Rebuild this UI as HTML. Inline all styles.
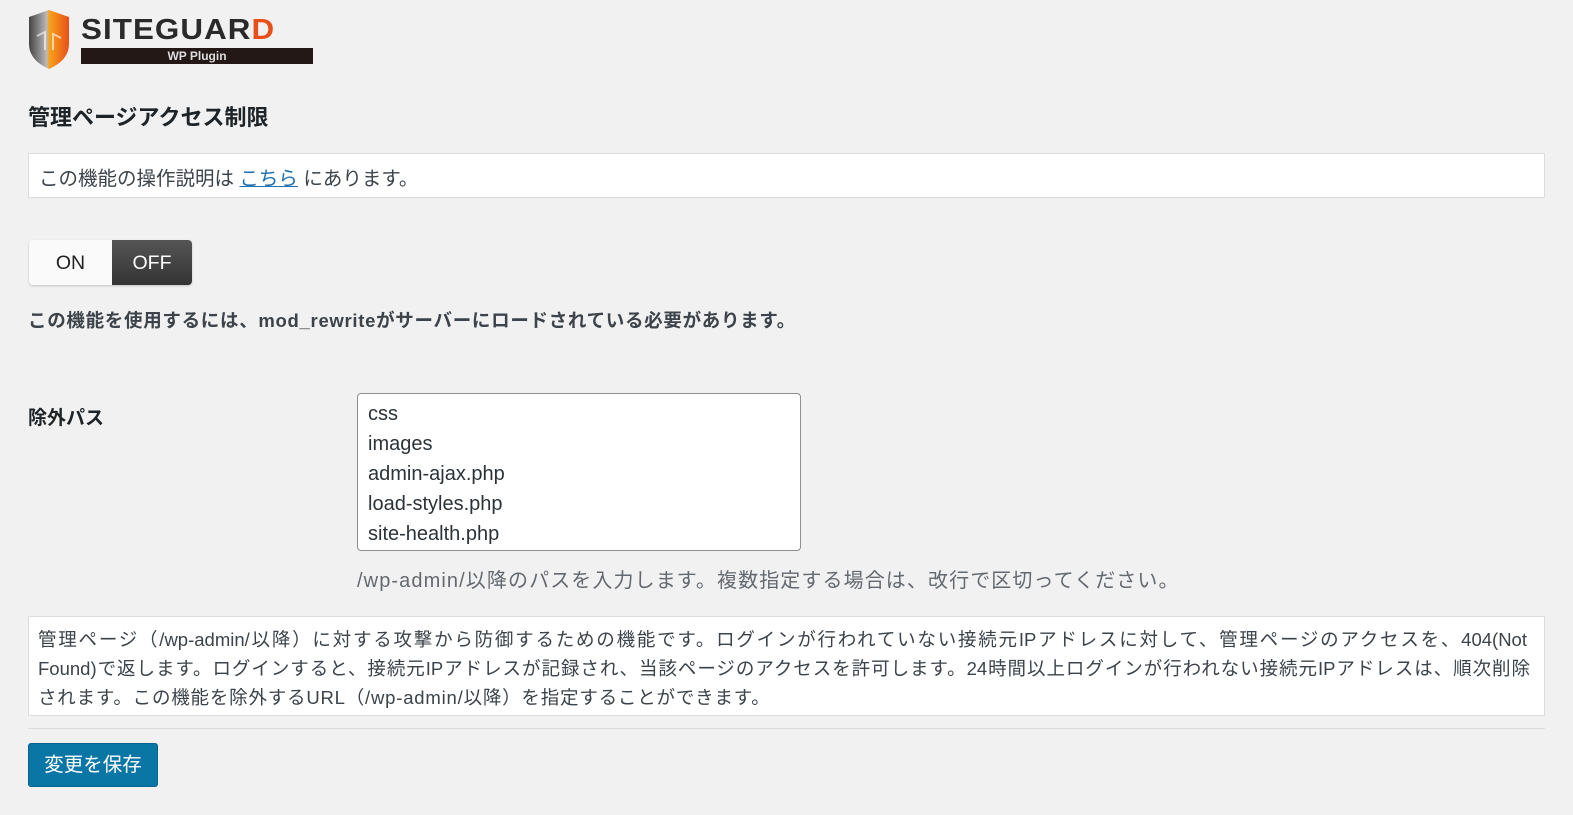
<!DOCTYPE html>
<html><head><meta charset="utf-8"><style>
body{margin:0;background:#f1f1f1;font-family:"Liberation Sans","Noto Sans CJK JP",sans-serif;color:#3c434a;width:1573px;height:815px;overflow:hidden;position:relative;font-size:19.5px}
.a{position:absolute;white-space:nowrap}
.box{background:#fff;border:1px solid #dcdcde;box-sizing:border-box;left:28px;width:1517px}
.j{display:block;text-align:justify;text-align-last:justify;white-space:normal}
</style></head><body>
<div class="a" style="left:27px;top:8px;width:290px;height:62px">
<svg width="44" height="62" viewBox="0 0 44 62" style="position:absolute;left:0;top:0">
<defs><linearGradient id="g" x1="0" x2="1"><stop offset="0" stop-color="#444"/><stop offset=".45" stop-color="#bbb"/><stop offset=".5" stop-color="#f7a21b"/><stop offset="1" stop-color="#e8501a"/></linearGradient></defs>
<path d="M22 2 L42 9 L42 36 Q42 52 22 61 Q2 52 2 36 L2 9 Z" fill="url(#g)"/>
<path d="M10 28 L18 24 L18 42 M26 42 L26 26 L34 30" stroke="#fff" stroke-width="2" fill="none" opacity=".6"/>
</svg>
<div class="a" style="left:54px;top:6px;font:bold 29px 'Liberation Sans',sans-serif;letter-spacing:1px;color:#2a2a2a;transform:scaleX(1.08);transform-origin:left">SITEGUAR<span style="color:#e8501a">D</span></div>
<div class="a" style="left:54px;top:40px;width:232px;height:16px;background:#231815;color:#ddd;font:bold 12px 'Liberation Sans',sans-serif;text-align:center;line-height:16px">WP Plugin</div>
</div>
<div class="a" style="left:28px;top:100px;font-size:22px;font-weight:bold;color:#1d2327">管理ページアクセス制限</div>
<div class="a box" style="top:153px;height:45px;padding:8px 10px">この機能の操作説明は <span style="color:#2271b1;text-decoration:underline">こちら</span> にあります。</div>
<div class="a" style="left:29px;top:240px;width:163px;height:45px;border-radius:4px;overflow:hidden;box-shadow:0 1px 2px rgba(0,0,0,.2)">
<div class="a" style="left:0;top:0;width:83px;height:45px;background:#fafafa;color:#222;text-align:center;line-height:47px">ON</div>
<div class="a" style="left:83px;top:0;width:80px;height:45px;background:linear-gradient(#555,#333);color:#fff;text-align:center;line-height:47px">OFF</div>
</div>
<div class="a" style="left:28px;top:307px;font-weight:bold;font-size:18.5px;letter-spacing:.7px">この機能を使用するには、mod_rewriteがサーバーにロードされている必要があります。</div>
<div class="a" style="left:28px;top:403px;font-weight:bold;font-size:19px;color:#1d2327">除外パス</div>
<div class="a" style="left:357px;top:393px;width:444px;height:158px;background:#fff;border:1px solid #8c8f94;border-radius:4px;box-sizing:border-box;padding:5px 10px;font-size:20px;line-height:30px;color:#2c3338">css<br>images<br>admin-ajax.php<br>load-styles.php<br>site-health.php</div>
<div class="a" style="left:357px;top:564px;color:#646970;font-size:20px;letter-spacing:1.1px">/wp-admin/以降のパスを入力します。複数指定する場合は、改行で区切ってください。</div>
<div class="a box" style="top:616px;height:100px;padding:8px 9px;line-height:29px;font-size:18.5px">
<span class="j" style="width:1489px">管理ページ（/wp-admin/以降）に対する攻撃から防御するための機能です。ログインが行われていない接続元IPアドレスに対して、管理ページのアクセスを、404(Not</span>
<span class="j" style="width:1492px">Found)で返します。ログインすると、接続元IPアドレスが記録され、当該ページのアクセスを許可します。24時間以上ログインが行われない接続元IPアドレスは、順次削除</span>
<span style="display:block;letter-spacing:.8px">されます。この機能を除外するURL（/wp-admin/以降）を指定することができます。</span></div>
<div class="a" style="left:28px;top:728px;width:1517px;height:1px;background:#dcdcde"></div>
<div class="a" style="left:28px;top:743px;width:130px;height:44px;background:#0a76a6;border:1px solid #08638c;border-radius:3px;box-sizing:border-box;color:#fff;text-align:center;line-height:42px">変更を保存</div>
</body></html>
